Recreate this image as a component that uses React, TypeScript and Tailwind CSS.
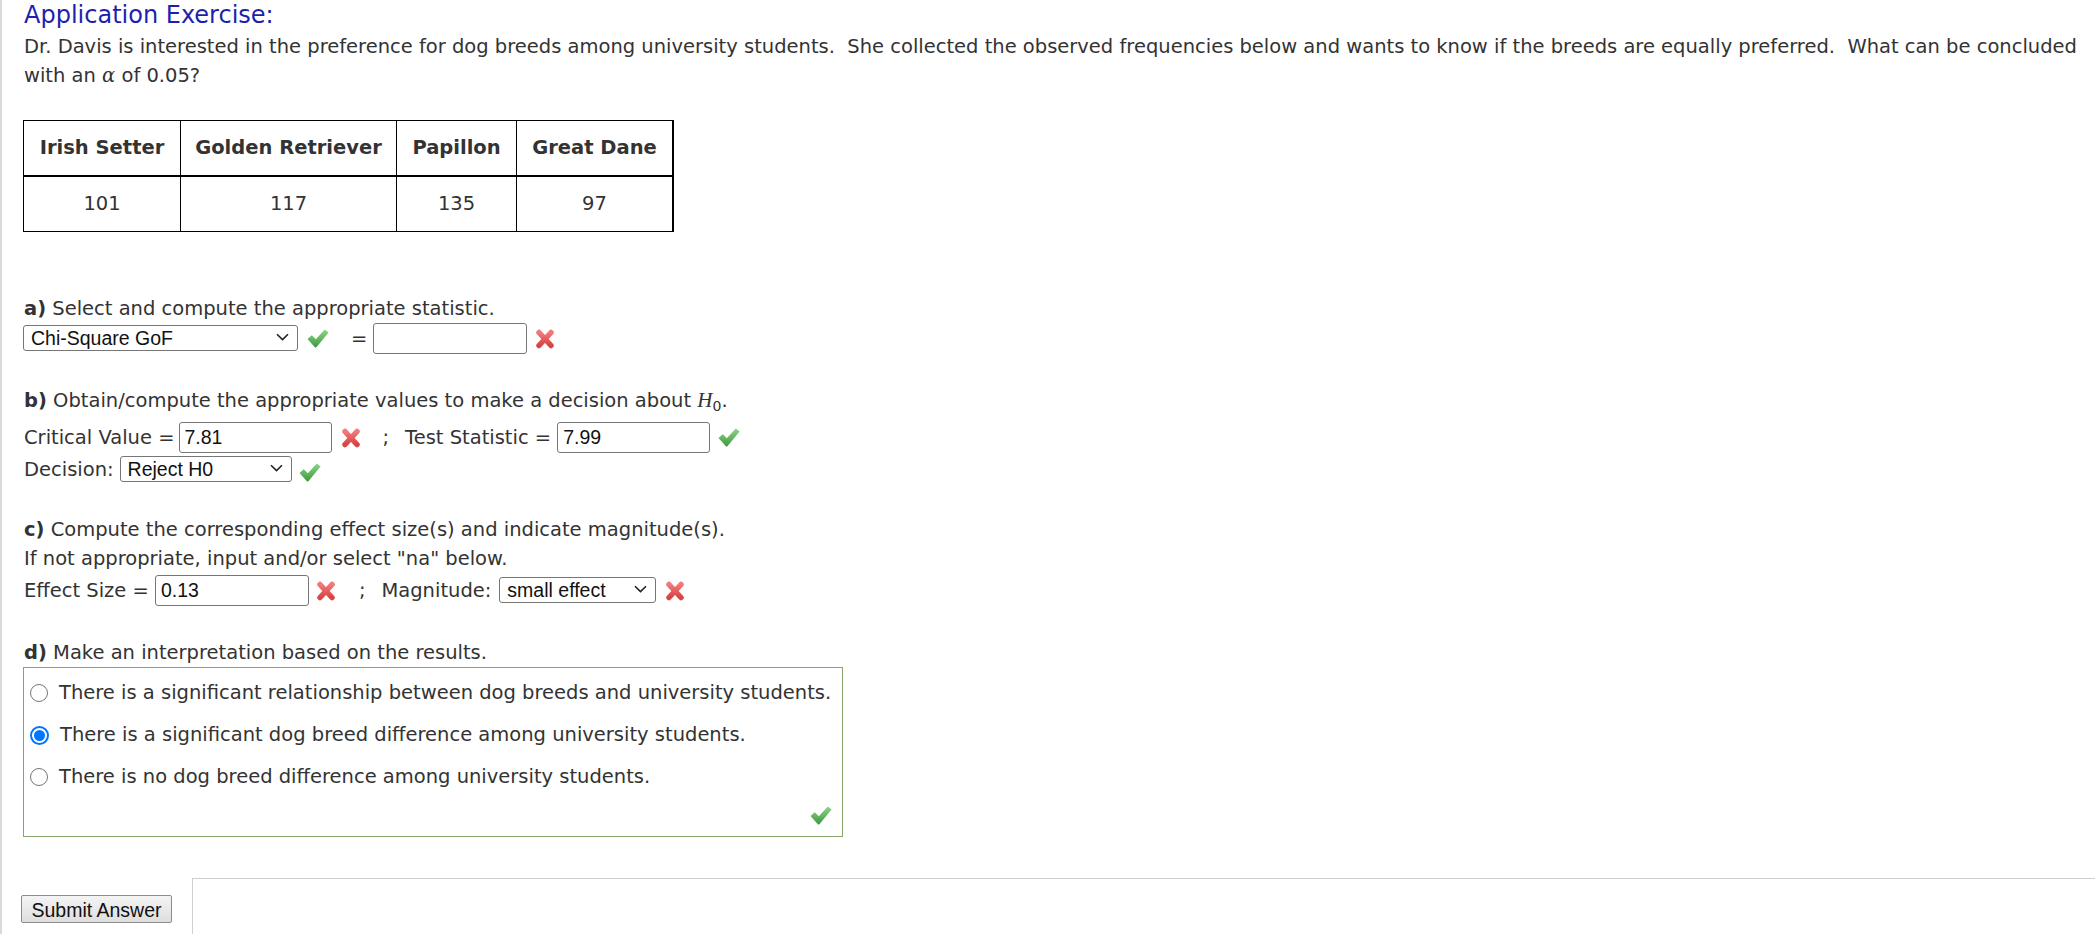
import React from "react";

const TXT = "font-['DejaVu_Sans',Verdana,sans-serif] text-[19.5px] text-[#333]";
const CTRL = "font-['Liberation_Sans',Arial,sans-serif] text-[19.5px] text-[#111]";

function Check({ className = "" }: { className?: string }) {
  return (
    <svg width="22" height="19" viewBox="0 0 22 19" className={`shrink-0 ${className}`}>
      <defs>
        <linearGradient id="gck" x1="0" y1="0" x2="0" y2="1">
          <stop offset="0" stopColor="#8fd48a" />
          <stop offset="1" stopColor="#3f993f" />
        </linearGradient>
      </defs>
      <path d="M0.5 10 L4.8 6.2 L8.8 10.2 L17.8 0.5 L21.6 3.6 L9.6 17.9 Q8.6 19 7.6 17.9 Z" fill="url(#gck)" />
    </svg>
  );
}

function Cross({ className = "" }: { className?: string }) {
  return (
    <svg width="20" height="20" viewBox="0 0 20 20" className={`shrink-0 ${className}`}>
      <defs>
        <linearGradient id="gcx" x1="0" y1="0" x2="0" y2="1">
          <stop offset="0" stopColor="#f27a7a" />
          <stop offset="1" stopColor="#d94343" />
        </linearGradient>
      </defs>
      <g stroke="url(#gcx)" strokeWidth="5.5" strokeLinecap="round">
        <line x1="4" y1="3.5" x2="16" y2="16.5" />
        <line x1="16" y1="3.5" x2="4" y2="16.5" />
      </g>
    </svg>
  );
}

function Select({ w, value, className = "" }: { w: string; value: string; className?: string }) {
  return (
    <div className={`relative shrink-0 ${className}`}>
      <select
        defaultValue={value}
        className={`${w} h-[26px] appearance-none border border-[#767676] rounded-[3px] bg-white pl-[7px] leading-[24px] ${CTRL}`}
      >
        <option>{value}</option>
      </select>
      <svg
        className="absolute right-[9px] top-[9px] pointer-events-none"
        width="13"
        height="8"
        viewBox="0 0 13 8"
      >
        <path d="M1 1.2 L6.5 6.6 L12 1.2" fill="none" stroke="#222" strokeWidth="1.6" />
      </svg>
    </div>
  );
}

function Input({ w, value, className = "" }: { w: string; value: string; className?: string }) {
  return (
    <input
      readOnly
      defaultValue={value}
      className={`${w} h-[31px] shrink-0 border border-[#767676] rounded-[3px] bg-white pl-[5px] ${CTRL} ${className}`}
    />
  );
}

function Radio({ checked }: { checked?: boolean }) {
  if (checked) {
    return (
      <span className="w-[19px] h-[19px] shrink-0 rounded-full border-2 border-[#0075ff] bg-white flex items-center justify-center">
        <span className="w-[11px] h-[11px] rounded-full bg-[#0075ff]" />
      </span>
    );
  }
  return <span className="w-[18px] h-[18px] shrink-0 rounded-full border border-[#767676] bg-white" />;
}

export default function App() {
  const rows = [
    { t: "There is a significant relationship between dog breeds and university students.", c: false },
    { t: "There is a significant dog breed difference among university students.", c: true },
    { t: "There is no dog breed difference among university students.", c: false },
  ];
  return (
    <div className="min-h-[934px] w-full bg-white border-l-2 border-[#d9d9d9] flex flex-col">
      <div className={`pl-[22px] ${TXT}`}>
        <h1 className="font-['DejaVu_Sans',Verdana,sans-serif] text-[24px] leading-[30px] font-normal text-[#1f1fae]">
          Application Exercise:
        </h1>
        <p className="mt-[2px] leading-[29px] whitespace-nowrap">
          Dr. Davis is interested in the preference for dog breeds among university students.&nbsp; She collected the
          observed frequencies below and wants to know if the breeds are equally preferred.&nbsp; What can be concluded
          <br />
          with an <span className="italic font-['DejaVu_Serif',serif]">α</span> of 0.05?
        </p>

        <table className="mt-[30px] ml-[-1px] table-fixed border-separate border-spacing-0 border-l border-t border-black w-[651px]">
          <colgroup>
            <col className="w-[157px]" />
            <col className="w-[216px]" />
            <col className="w-[120px]" />
            <col className="w-[157px]" />
          </colgroup>
          <thead>
            <tr>
              {["Irish Setter", "Golden Retriever", "Papillon", "Great Dane"].map((h, i) => (
                <th
                  key={h}
                  className={`h-[56px] p-0 text-center font-bold border-b-2 border-black ${i === 3 ? "border-r-2" : "border-r"}`}
                >
                  {h}
                </th>
              ))}
            </tr>
          </thead>
          <tbody>
            <tr>
              {["101", "117", "135", "97"].map((v, i) => (
                <td
                  key={i}
                  className={`h-[55px] p-0 text-center border-b border-black ${i === 3 ? "border-r-2" : "border-r"}`}
                >
                  {v}
                </td>
              ))}
            </tr>
          </tbody>
        </table>

        {/* a */}
        <div className="mt-[62px] leading-[29px]">
          <b>a)</b> Select and compute the appropriate statistic.
        </div>
        <div className="flex items-center h-[31px] ml-[-1px]">
          <Select w="w-[275px]" value="Chi-Square GoF" />
          <Check className="ml-[9px]" />
          <span className="ml-[22px]">=</span>
          <Input w="w-[154px]" value="" className="ml-[6px]" />
          <Cross className="ml-[8px]" />
        </div>

        {/* b */}
        <div className="mt-[32px] leading-[29px]">
          <b>b)</b> Obtain/compute the appropriate values to make a decision about{" "}
          <span className="italic font-['Liberation_Serif',serif] text-[21px]">H</span>
          <sub className="text-[14px]">0</sub>.
        </div>
        <div className="mt-[7px] flex items-center h-[31px]">
          <span>Critical Value =</span>
          <Input w="w-[153px]" value="7.81" className="ml-[4px]" />
          <Cross className="ml-[9px]" />
          <span className="ml-[22px]">;</span>
          <span className="ml-[16px]">Test Statistic =</span>
          <Input w="w-[153px]" value="7.99" className="ml-[6px]" />
          <Check className="ml-[8px]" />
        </div>
        <div className="mt-[4px] flex items-center h-[26px]">
          <span>Decision:</span>
          <Select w="w-[172px]" value="Reject H0" className="ml-[6px]" />
          <Check className="ml-[7px] mt-[4px]" />
        </div>

        {/* c */}
        <div className="mt-[32px] leading-[29px]">
          <b>c)</b> Compute the corresponding effect size(s) and indicate magnitude(s).
          <br />
          If not appropriate, input and/or select "na" below.
        </div>
        <div className="mt-[2px] flex items-center h-[31px]">
          <span>Effect Size =</span>
          <Input w="w-[154px]" value="0.13" className="ml-[6px]" />
          <Cross className="ml-[7px]" />
          <span className="ml-[23px]">;</span>
          <span className="ml-[16px]">Magnitude:</span>
          <Select w="w-[157px]" value="small effect" className="ml-[8px]" />
          <Cross className="ml-[9px]" />
        </div>

        {/* d */}
        <div className="mt-[32px] leading-[29px]">
          <b>d)</b> Make an interpretation based on the results.
        </div>
        <div className="ml-[-1px] w-[820px] border border-[#86a46c] pt-[4px]">
          {rows.map((r) => (
            <div key={r.t} className="h-[42px] flex items-center pl-[6px] whitespace-nowrap">
              <Radio checked={r.c} />
              <span className="ml-[11px]">{r.t}</span>
            </div>
          ))}
          <div className="flex justify-end pr-[10px] pt-[8px] pb-[11px]">
            <Check />
          </div>
        </div>
      </div>

      {/* bottom */}
      <div className="mt-[41px] flex flex-1">
        <div className="w-[190px] shrink-0">
          <button
            className={`ml-[19px] mt-[17px] w-[151px] h-[28px] border border-[#8c8c8c] rounded-[2px] bg-gradient-to-b from-[#f4f4f4] to-[#dedede] ${CTRL}`}
          >
            Submit Answer
          </button>
        </div>
        <div className="flex-1 border-t border-l border-[#cfcfcf]" />
      </div>
    </div>
  );
}
